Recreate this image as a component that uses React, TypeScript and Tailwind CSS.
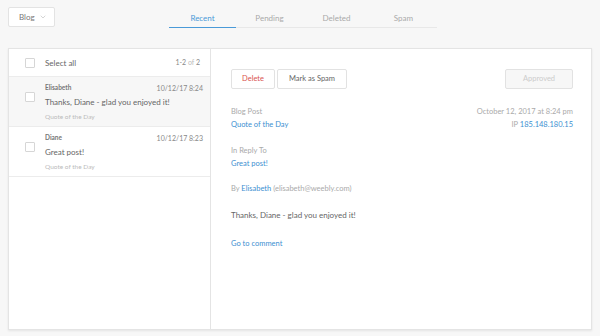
import { ChevronDown } from 'lucide-react';

const font = { fontFamily: 'Lato, "Open Sans", sans-serif' };

interface Comment {
  author: string;
  date: string;
  text: string;
  post: string;
  active?: boolean;
}

const comments: Comment[] = [
  { author: 'Elisabeth', date: '10/12/17 8:24', text: 'Thanks, Diane - glad you enjoyed it!', post: 'Quote of the Day', active: true },
  { author: 'Diane', date: '10/12/17 8:23', text: 'Great post!', post: 'Quote of the Day' },
];

const tabs = ['Recent', 'Pending', 'Deleted', 'Spam'];

function Checkbox() {
  return <div className="w-[10px] h-[10px] border border-[#d6d6d6] bg-white rounded-[1px] shrink-0" />;
}

export default function App() {
  return (
    <div className="w-[600px] h-[336px] bg-[#f7f7f7] text-[#555] overflow-hidden" style={font}>
      {/* top bar */}
      <div className="flex items-center h-[48px] px-[8px] pb-[14px]">
        <button className="flex items-center gap-[4px] h-[20px] w-[47px] pl-[10px] bg-white border border-[#e3e3e3] rounded-[2px] text-[8px] text-[#777]">
          Blog
          <ChevronDown size={8} strokeWidth={1.5} className="text-[#aaa]" />
        </button>
        <div className="flex ml-[114px] border-b border-[#e8e8e8] h-[20px] mt-[2px]">
          {tabs.map((tab, i) => (
            <div
              key={tab}
              className={`w-[67px] flex items-center justify-center text-[8px] -mb-px ${
                i === 0 ? 'text-[#4a9ad8] border-b border-[#4a9ad8]' : 'text-[#aaa]'
              }`}
            >
              {tab}
            </div>
          ))}
        </div>
      </div>

      {/* main panel */}
      <div className="mx-[8px] h-[282px] bg-white border border-[#e4e4e4] shadow-[0_1px_2px_rgba(0,0,0,0.08)] flex">
        {/* list */}
        <div className="w-[202px] border-r border-[#e4e4e4] shrink-0">
          <div className="flex items-center h-[28px] pl-[16px] pr-[10px] border-b border-[#ececec]">
            <Checkbox />
            <span className="ml-[10px] text-[8px] text-[#666]">Select all</span>
            <span className="ml-auto text-[7px] text-[#888]">
              1-2 <span className="text-[#bbb]">of</span> 2
            </span>
          </div>
          {comments.map((c) => (
            <div
              key={c.author}
              className={`flex h-[50px] pl-[16px] pr-[7px] border-b border-[#ececec] ${c.active ? 'bg-[#f7f7f7]' : 'bg-white'}`}
            >
              <div className="pt-[15px]">
                <Checkbox />
              </div>
              <div className="ml-[10px] flex-1 pt-[6px]">
                <div className="flex justify-between items-center h-[10px]">
                  <span className="text-[6.5px] font-bold text-[#777]">{c.author}</span>
                  <span className="text-[7px] text-[#888]">{c.date}</span>
                </div>
                <div className="text-[8px] text-[#666] mt-[4px] leading-[10px]">{c.text}</div>
                <div className="text-[6.5px] text-[#bbb] mt-[6px] leading-[8px]">{c.post}</div>
              </div>
            </div>
          ))}
        </div>

        {/* detail */}
        <div className="flex-1 pl-[20px] pr-[18px] pt-[20px] text-[7.5px]">
          <div className="flex justify-between">
            <div className="flex gap-[2px]">
              <button className="h-[20px] w-[44px] border border-[#e2e2e2] rounded-[2px] text-[#d9534f]">Delete</button>
              <button className="h-[20px] w-[70px] border border-[#e2e2e2] rounded-[2px] text-[#666]">Mark as Spam</button>
            </div>
            <button className="h-[20px] w-[68px] border border-[#e2e2e2] bg-[#f7f7f7] rounded-[2px] text-[#ccc]">Approved</button>
          </div>

          <div className="flex justify-between mt-[16px] leading-[13px]">
            <div>
              <div className="text-[#aaa]">Blog Post</div>
              <div className="text-[#3d8fd1]">Quote of the Day</div>
            </div>
            <div className="text-right">
              <div className="text-[#aaa]">October 12, 2017 at 8:24 pm</div>
              <div className="text-[#aaa]">
                IP <span className="text-[#3d8fd1]">185.148.180.15</span>
              </div>
            </div>
          </div>

          <div className="mt-[13px] leading-[13px]">
            <div className="text-[#aaa]">In Reply To</div>
            <div className="text-[#3d8fd1]">Great post!</div>
          </div>

          <div className="mt-[12px] leading-[13px] text-[#aaa]">
            By <span className="text-[#3d8fd1]">Elisabeth</span> (elisabeth@weebly.com)
          </div>

          <div className="mt-[14px] leading-[13px] text-[8px] text-[#666]">Thanks, Diane - glad you enjoyed it!</div>

          <div className="mt-[15px] leading-[13px] text-[#3d8fd1]">Go to comment</div>
        </div>
      </div>
    </div>
  );
}
